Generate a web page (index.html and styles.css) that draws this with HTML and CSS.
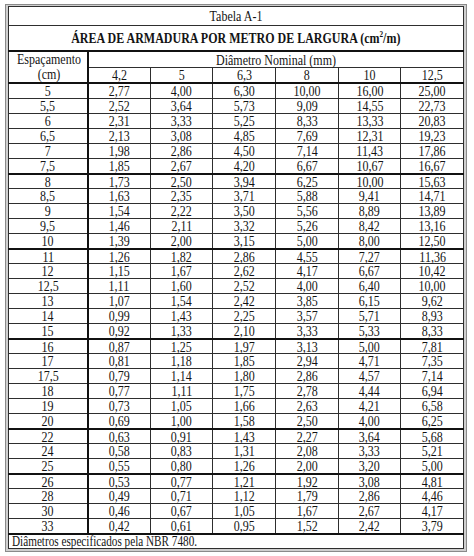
FILE: index.html
```html
<!DOCTYPE html>
<html lang="pt">
<head>
<meta charset="utf-8">
<title>Tabela A-1</title>
<link rel="stylesheet" href="styles.css">
</head>
<body>
<div class="frame">
<table class="grid">
<colgroup><col class="c-sp"><col class="c-d"><col class="c-d"><col class="c-d"><col class="c-d"><col class="c-d"><col class="c-d"></colgroup>
<tr class="title"><td colspan="7"><span>Tabela A-1</span></td></tr>
<tr class="heading"><td colspan="7"><span>ÁREA DE ARMADURA POR METRO DE LARGURA (cm<sup>2</sup>/m)</span></td></tr>
<tr class="h1"><td rowspan="2" class="sp"><span>Espaçamento<br>(cm)</span></td><td colspan="6"><span>Diâmetro Nominal (mm)</span></td></tr>
<tr class="h2"><td><span>4,2</span></td><td><span>5</span></td><td><span>6,3</span></td><td><span>8</span></td><td><span>10</span></td><td><span>12,5</span></td></tr>
<tr><td class="sp"><span>5</span></td><td><span>2,77</span></td><td><span>4,00</span></td><td><span>6,30</span></td><td><span>10,00</span></td><td><span>16,00</span></td><td><span>25,00</span></td></tr>
<tr><td class="sp"><span>5,5</span></td><td><span>2,52</span></td><td><span>3,64</span></td><td><span>5,73</span></td><td><span>9,09</span></td><td><span>14,55</span></td><td><span>22,73</span></td></tr>
<tr><td class="sp"><span>6</span></td><td><span>2,31</span></td><td><span>3,33</span></td><td><span>5,25</span></td><td><span>8,33</span></td><td><span>13,33</span></td><td><span>20,83</span></td></tr>
<tr><td class="sp"><span>6,5</span></td><td><span>2,13</span></td><td><span>3,08</span></td><td><span>4,85</span></td><td><span>7,69</span></td><td><span>12,31</span></td><td><span>19,23</span></td></tr>
<tr><td class="sp"><span>7</span></td><td><span>1,98</span></td><td><span>2,86</span></td><td><span>4,50</span></td><td><span>7,14</span></td><td><span>11,43</span></td><td><span>17,86</span></td></tr>
<tr><td class="sp"><span>7,5</span></td><td><span>1,85</span></td><td><span>2,67</span></td><td><span>4,20</span></td><td><span>6,67</span></td><td><span>10,67</span></td><td><span>16,67</span></td></tr>
<tr class="grp"><td class="sp"><span>8</span></td><td><span>1,73</span></td><td><span>2,50</span></td><td><span>3,94</span></td><td><span>6,25</span></td><td><span>10,00</span></td><td><span>15,63</span></td></tr>
<tr><td class="sp"><span>8,5</span></td><td><span>1,63</span></td><td><span>2,35</span></td><td><span>3,71</span></td><td><span>5,88</span></td><td><span>9,41</span></td><td><span>14,71</span></td></tr>
<tr><td class="sp"><span>9</span></td><td><span>1,54</span></td><td><span>2,22</span></td><td><span>3,50</span></td><td><span>5,56</span></td><td><span>8,89</span></td><td><span>13,89</span></td></tr>
<tr><td class="sp"><span>9,5</span></td><td><span>1,46</span></td><td><span>2,11</span></td><td><span>3,32</span></td><td><span>5,26</span></td><td><span>8,42</span></td><td><span>13,16</span></td></tr>
<tr><td class="sp"><span>10</span></td><td><span>1,39</span></td><td><span>2,00</span></td><td><span>3,15</span></td><td><span>5,00</span></td><td><span>8,00</span></td><td><span>12,50</span></td></tr>
<tr class="grp"><td class="sp"><span>11</span></td><td><span>1,26</span></td><td><span>1,82</span></td><td><span>2,86</span></td><td><span>4,55</span></td><td><span>7,27</span></td><td><span>11,36</span></td></tr>
<tr><td class="sp"><span>12</span></td><td><span>1,15</span></td><td><span>1,67</span></td><td><span>2,62</span></td><td><span>4,17</span></td><td><span>6,67</span></td><td><span>10,42</span></td></tr>
<tr><td class="sp"><span>12,5</span></td><td><span>1,11</span></td><td><span>1,60</span></td><td><span>2,52</span></td><td><span>4,00</span></td><td><span>6,40</span></td><td><span>10,00</span></td></tr>
<tr><td class="sp"><span>13</span></td><td><span>1,07</span></td><td><span>1,54</span></td><td><span>2,42</span></td><td><span>3,85</span></td><td><span>6,15</span></td><td><span>9,62</span></td></tr>
<tr><td class="sp"><span>14</span></td><td><span>0,99</span></td><td><span>1,43</span></td><td><span>2,25</span></td><td><span>3,57</span></td><td><span>5,71</span></td><td><span>8,93</span></td></tr>
<tr><td class="sp"><span>15</span></td><td><span>0,92</span></td><td><span>1,33</span></td><td><span>2,10</span></td><td><span>3,33</span></td><td><span>5,33</span></td><td><span>8,33</span></td></tr>
<tr class="grp"><td class="sp"><span>16</span></td><td><span>0,87</span></td><td><span>1,25</span></td><td><span>1,97</span></td><td><span>3,13</span></td><td><span>5,00</span></td><td><span>7,81</span></td></tr>
<tr><td class="sp"><span>17</span></td><td><span>0,81</span></td><td><span>1,18</span></td><td><span>1,85</span></td><td><span>2,94</span></td><td><span>4,71</span></td><td><span>7,35</span></td></tr>
<tr><td class="sp"><span>17,5</span></td><td><span>0,79</span></td><td><span>1,14</span></td><td><span>1,80</span></td><td><span>2,86</span></td><td><span>4,57</span></td><td><span>7,14</span></td></tr>
<tr><td class="sp"><span>18</span></td><td><span>0,77</span></td><td><span>1,11</span></td><td><span>1,75</span></td><td><span>2,78</span></td><td><span>4,44</span></td><td><span>6,94</span></td></tr>
<tr><td class="sp"><span>19</span></td><td><span>0,73</span></td><td><span>1,05</span></td><td><span>1,66</span></td><td><span>2,63</span></td><td><span>4,21</span></td><td><span>6,58</span></td></tr>
<tr><td class="sp"><span>20</span></td><td><span>0,69</span></td><td><span>1,00</span></td><td><span>1,58</span></td><td><span>2,50</span></td><td><span>4,00</span></td><td><span>6,25</span></td></tr>
<tr class="grp"><td class="sp"><span>22</span></td><td><span>0,63</span></td><td><span>0,91</span></td><td><span>1,43</span></td><td><span>2,27</span></td><td><span>3,64</span></td><td><span>5,68</span></td></tr>
<tr><td class="sp"><span>24</span></td><td><span>0,58</span></td><td><span>0,83</span></td><td><span>1,31</span></td><td><span>2,08</span></td><td><span>3,33</span></td><td><span>5,21</span></td></tr>
<tr><td class="sp"><span>25</span></td><td><span>0,55</span></td><td><span>0,80</span></td><td><span>1,26</span></td><td><span>2,00</span></td><td><span>3,20</span></td><td><span>5,00</span></td></tr>
<tr class="grp"><td class="sp"><span>26</span></td><td><span>0,53</span></td><td><span>0,77</span></td><td><span>1,21</span></td><td><span>1,92</span></td><td><span>3,08</span></td><td><span>4,81</span></td></tr>
<tr><td class="sp"><span>28</span></td><td><span>0,49</span></td><td><span>0,71</span></td><td><span>1,12</span></td><td><span>1,79</span></td><td><span>2,86</span></td><td><span>4,46</span></td></tr>
<tr><td class="sp"><span>30</span></td><td><span>0,46</span></td><td><span>0,67</span></td><td><span>1,05</span></td><td><span>1,67</span></td><td><span>2,67</span></td><td><span>4,17</span></td></tr>
<tr><td class="sp"><span>33</span></td><td><span>0,42</span></td><td><span>0,61</span></td><td><span>0,95</span></td><td><span>1,52</span></td><td><span>2,42</span></td><td><span>3,79</span></td></tr>
<tr class="grp foot"><td colspan="7"><span>Diâmetros especificados pela NBR 7480.</span></td></tr>
</table>
</div>
</body>
</html>
```

FILE: styles.css
```css
html, body {
  margin: 0;
  padding: 0;
  background: #ffffff;
}

body {
  font-family: "Liberation Serif", "Times New Roman", serif;
  color: #141414;
}

.frame {
  display: inline-block;
  margin: 4px 0 0 5px;
  padding: 1px 2px 2px 2px;
  border: 1px solid #8a8a8a;
  background: #cfcfcf;
}

.grid {
  border-collapse: collapse;
  table-layout: fixed;
  width: 456px;
  background: #ffffff;
  border: 1px solid #262626;
}

.c-sp { width: 79px; }
.c-d { width: 62.5px; }

.grid td {
  border: 1px solid #2e2e2e;
  padding: 0;
  height: 14px;
  text-align: center;
  vertical-align: middle;
  font-size: 15px;
  line-height: 12px;
  white-space: nowrap;
}

.grid td span {
  display: inline-block;
  transform: scaleX(0.8);
}

.grid td.sp {
  border-right: 2px solid #111111;
}

.grid tr.grp td {
  border-top: 2px solid #111111;
  height: 13px;
}

.grid .title td {
  height: 18px;
  line-height: 16px;
}

.grid .heading td {
  height: 24px;
  line-height: 16px;
  font-weight: bold;
  border-bottom: 2px solid #111111;
}

.grid .heading sup {
  font-size: 9px;
  line-height: 0;
  vertical-align: 6px;
}

.grid .h1 td {
  height: 15px;
}

.grid .h1 td.sp {
  line-height: 15px;
  border-bottom: 2px solid #111111;
}

.grid .h2 td {
  border-bottom: 2px solid #111111;
}

.grid .foot td {
  text-align: left;
  font-size: 14px;
  height: 12px;
  padding-left: 3px;
}

.grid .foot td span {
  transform-origin: left center;
}
```
